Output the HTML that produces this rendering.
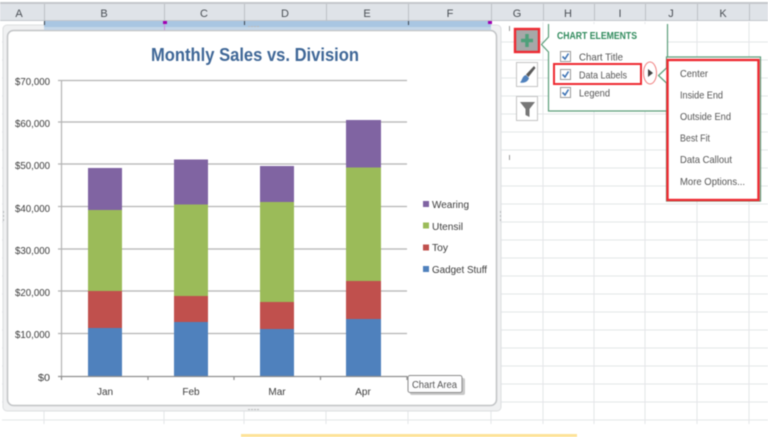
<!DOCTYPE html>
<html><head><meta charset="utf-8"><style>
html,body{margin:0;padding:0;background:#fff;width:768px;height:437px;overflow:hidden}
svg{display:block;filter:blur(.45px)}
text{font-family:"Liberation Sans",sans-serif}
</style></head><body>
<svg width="768" height="437" viewBox="0 0 768 437" xmlns="http://www.w3.org/2000/svg">
<rect width="768" height="437" fill="#fff"/>
<!-- grid -->
<g stroke="#e3e6e8" stroke-width="1" fill="none">
<path d="M2 42H768M2 60H768M2 78H768M2 96H768M2 114H768M2 132H768M2 150H768M2 168H768M2 186H768M2 204H768M2 222H768M2 240H768M2 258H768M2 276H768M2 294H768M2 312H768M2 330H768M2 348H768M2 366H768M2 384H768M2 402H768M2 420H768"/>
<path d="M44 22V424M164 22V424M244 22V424M326 22V424M408 22V424M491 22V424M543 22V424M594 22V424M645 22V424M697 22V424M749 22V424"/>
</g>
<!-- header -->
<rect x="0" y="2" width="768" height="2" fill="#c4c7cb"/>
<rect x="0" y="4" width="768" height="17" fill="#dfe3e8"/>
<rect x="0" y="20" width="768" height="1" fill="#c3c7cc"/>
<g stroke="#bcc0c6"><path d="M44.500 4V21M164.500 4V21M244.500 4V21M326.500 4V21M408.500 4V21M491.500 4V21M543.500 4V21M594.500 4V21M645.500 4V21M697.500 4V21M749.500 4V21"/></g>
<g font-size="11" fill="#4a4f55" text-anchor="middle">
<text x="19" y="17">A</text><text x="104" y="17">B</text><text x="204" y="17">C</text><text x="285" y="17">D</text><text x="367" y="17">E</text><text x="450" y="17">F</text><text x="517" y="17">G</text><text x="568" y="17">H</text><text x="620" y="17">I</text><text x="671" y="17">J</text><text x="723" y="17">K</text>
</g>
<!-- chart frame -->
<rect x="3" y="25" width="498" height="386" rx="4" fill="#f0f1f2" stroke="#dcdee0"/>
<rect x="7.500" y="30.500" width="489" height="375" rx="6" fill="#fff" stroke="#c2c4c6" stroke-width="1.500"/>
<!-- selected band -->
<rect x="44" y="21" width="447" height="9" fill="#a9c6e2"/>
<rect x="44" y="27" width="447" height="3" fill="#c4d6e8"/>
<g fill="#3c4650"><rect x="44" y="21" width="1" height="4"/><rect x="244" y="21" width="1" height="4"/><rect x="408" y="21" width="1" height="4"/></g>
<rect x="163" y="21" width="4" height="3" fill="#a000b0"/><rect x="488" y="21" width="4" height="3" fill="#a000b0"/>
<rect x="164" y="24" width="1" height="6" fill="#d090d8"/>
<g fill="#b8babc"><rect x="248" y="409" width="2" height="1"/><rect x="251" y="409" width="2" height="1"/><rect x="254" y="409" width="2" height="1"/><rect x="257" y="409" width="2" height="1"/><rect x="248" y="26" width="2" height="1"/><rect x="251" y="26" width="2" height="1"/><rect x="254" y="26" width="2" height="1"/><rect x="257" y="26" width="2" height="1"/><rect x="500" y="211" width="1" height="2"/><rect x="500" y="215" width="1" height="2"/><rect x="500" y="219" width="1" height="2"/><rect x="3" y="211" width="1" height="2"/><rect x="3" y="215" width="1" height="2"/><rect x="3" y="219" width="1" height="2"/></g>
<text x="151" y="61" font-size="18.500" font-weight="bold" fill="#3f6797" textLength="208" lengthAdjust="spacingAndGlyphs">Monthly Sales vs. Division</text>
<!-- gridlines -->
<g stroke="#b4b4b4" stroke-width="1.200"><path d="M58 80.500H407M58 122H407M58 164H407M58 206.500H407M58 249H407M58 291H407M58 333.500H407"/></g>
<path d="M61.500 80V376" stroke="#b4b4b4" stroke-width="1.200"/>
<g font-size="10.500" fill="#3c3c3c">
<text x="15" y="85" textLength="35" lengthAdjust="spacingAndGlyphs">$70,000</text><text x="15" y="127" textLength="35" lengthAdjust="spacingAndGlyphs">$60,000</text><text x="15" y="169" textLength="35" lengthAdjust="spacingAndGlyphs">$50,000</text><text x="15" y="212" textLength="35" lengthAdjust="spacingAndGlyphs">$40,000</text><text x="15" y="254" textLength="35" lengthAdjust="spacingAndGlyphs">$30,000</text><text x="15" y="296" textLength="35" lengthAdjust="spacingAndGlyphs">$20,000</text><text x="15" y="338" textLength="35" lengthAdjust="spacingAndGlyphs">$10,000</text><text x="38" y="381" textLength="12" lengthAdjust="spacingAndGlyphs">$0</text>
</g>
<!-- bars -->
<g>
<rect x="88" y="168" width="34" height="42" fill="#8064a2"/><rect x="88" y="210" width="34" height="81" fill="#9bbb59"/><rect x="88" y="291" width="34" height="37" fill="#c0504d"/><rect x="88" y="328" width="34" height="48" fill="#4f81bd"/>
<rect x="174" y="159.500" width="34" height="45" fill="#8064a2"/><rect x="174" y="204.500" width="34" height="91.500" fill="#9bbb59"/><rect x="174" y="296" width="34" height="26" fill="#c0504d"/><rect x="174" y="322" width="34" height="54" fill="#4f81bd"/>
<rect x="260" y="166" width="34" height="36" fill="#8064a2"/><rect x="260" y="202" width="34" height="100" fill="#9bbb59"/><rect x="260" y="302" width="34" height="27" fill="#c0504d"/><rect x="260" y="329" width="34" height="47" fill="#4f81bd"/>
<rect x="346" y="120" width="35" height="47.500" fill="#8064a2"/><rect x="346" y="167.500" width="35" height="113.500" fill="#9bbb59"/><rect x="346" y="281" width="35" height="38" fill="#c0504d"/><rect x="346" y="319" width="35" height="57" fill="#4f81bd"/>
</g>
<path d="M58 376.500H407M61.500 376V380M148 376V380M234 376V380M320.500 376V380M407 376V380" stroke="#8e8e8e" stroke-width="1.200" fill="none"/>
<g font-size="10" fill="#3c3c3c" text-anchor="middle">
<text x="105" y="395">Jan</text><text x="191" y="395">Feb</text><text x="277" y="395">Mar</text><text x="363" y="395">Apr</text>
</g>
<!-- legend -->
<rect x="423" y="201" width="6" height="6" fill="#8064a2"/><rect x="423" y="222.500" width="6" height="6" fill="#9bbb59"/><rect x="423" y="244.500" width="6" height="6" fill="#c0504d"/><rect x="423" y="266" width="6" height="6" fill="#4f81bd"/>
<g font-size="10" fill="#3c3c3c">
<text x="432" y="208" textLength="37" lengthAdjust="spacingAndGlyphs">Wearing</text><text x="432" y="230" textLength="31" lengthAdjust="spacingAndGlyphs">Utensil</text><text x="432" y="251" textLength="16" lengthAdjust="spacingAndGlyphs">Toy</text><text x="432" y="273" textLength="55" lengthAdjust="spacingAndGlyphs">Gadget Stuff</text>
</g>
<!-- tooltip -->
<rect x="410" y="378" width="55" height="17" rx="2" fill="#777" opacity=".4"/>
<rect x="408" y="375.500" width="54" height="17" rx="2" fill="#fdfdfe" stroke="#8c8c8c"/>
<text x="412" y="388" font-size="10" fill="#555" textLength="45" lengthAdjust="spacingAndGlyphs">Chart Area</text>
<!-- stray marks -->
<rect x="509" y="26" width="1" height="5" fill="#999"/><rect x="509" y="155" width="1" height="5" fill="#999"/>
<!-- chart elements panel -->
<rect x="549" y="24" width="118" height="87" fill="#fff"/>
<path d="M548.500 24V37L541.500 44.500L548.500 52V111H668" fill="#fff" stroke="#5b9e7a" stroke-width="1.200"/>
<path d="M667.500 24V58" stroke="#5b9e7a" stroke-width="1.200"/>
<text x="557" y="39" font-size="10" font-weight="bold" fill="#2f8a5c" textLength="80" lengthAdjust="spacingAndGlyphs">CHART ELEMENTS</text>
<g fill="#fff" stroke="#9a9a9a"><rect x="560.500" y="51.500" width="10" height="10"/><rect x="560.500" y="69.500" width="10" height="10"/><rect x="560.500" y="87.500" width="10" height="10"/></g>
<g fill="none" stroke="#3f74b5" stroke-width="1.600"><path d="M562.500 56.500L565 59L568.500 53.500M562.500 74.500L565 77L568.500 71.500M562.500 92.500L565 95L568.500 89.500"/></g>
<g font-size="10.500" fill="#555"><text x="579" y="60.500" textLength="44" lengthAdjust="spacingAndGlyphs">Chart Title</text><text x="579" y="78.500" textLength="48" lengthAdjust="spacingAndGlyphs">Data Labels</text><text x="579" y="96.500" textLength="31" lengthAdjust="spacingAndGlyphs">Legend</text></g>
<rect x="554" y="64" width="87" height="20" fill="none" stroke="#ee2a32" stroke-width="2"/>
<ellipse cx="650" cy="73" rx="6.500" ry="11" fill="#fff" stroke="#f08080" stroke-width="1"/>
<path d="M648 69V77L653 73Z" fill="#444"/>
<!-- submenu -->
<path d="M666.500 57V68L658.500 75.500L666.500 83V201H760.500V57Z" fill="#fff" stroke="#5b9e7a" stroke-width="1.200"/>
<rect x="667.500" y="60" width="91" height="140" fill="#fff" stroke="#ee2a32" stroke-width="2.400"/>
<g font-size="10.500" fill="#555"><text x="680" y="77" textLength="28" lengthAdjust="spacingAndGlyphs">Center</text><text x="680" y="98.500" textLength="43" lengthAdjust="spacingAndGlyphs">Inside End</text><text x="680" y="120" textLength="51" lengthAdjust="spacingAndGlyphs">Outside End</text><text x="680" y="141.500" textLength="30" lengthAdjust="spacingAndGlyphs">Best Fit</text><text x="680" y="163" textLength="52" lengthAdjust="spacingAndGlyphs">Data Callout</text><text x="680" y="185" textLength="65" lengthAdjust="spacingAndGlyphs">More Options...</text></g>
<!-- buttons -->
<rect x="515" y="29" width="24" height="23" fill="#a6a8a8" stroke="#ee2a32" stroke-width="2.400"/>
<path d="M527 34V47M521 40.500H533" stroke="#4fa07a" stroke-width="3.500" fill="none"/>
<rect x="516.500" y="62.500" width="21" height="24" fill="#fff" stroke="#c4c4c4"/>
<path d="M534 66L526 74.500L528.500 77L535.500 68Z" fill="#5a5a5a"/>
<path d="M520 82.500C522 81 522 76 526 75L529 78C528 81.500 524.500 83.500 520 82.500Z" fill="#4f81bd"/>
<rect x="516.500" y="96.500" width="21" height="24" fill="#fff" stroke="#c4c4c4"/>
<path d="M520 102H535L529.500 109V117L525.500 115V109Z" fill="#777"/>
<!-- yellow strip -->
<rect x="241" y="434" width="336" height="3" fill="#fde398"/>
</svg>
</body></html>
